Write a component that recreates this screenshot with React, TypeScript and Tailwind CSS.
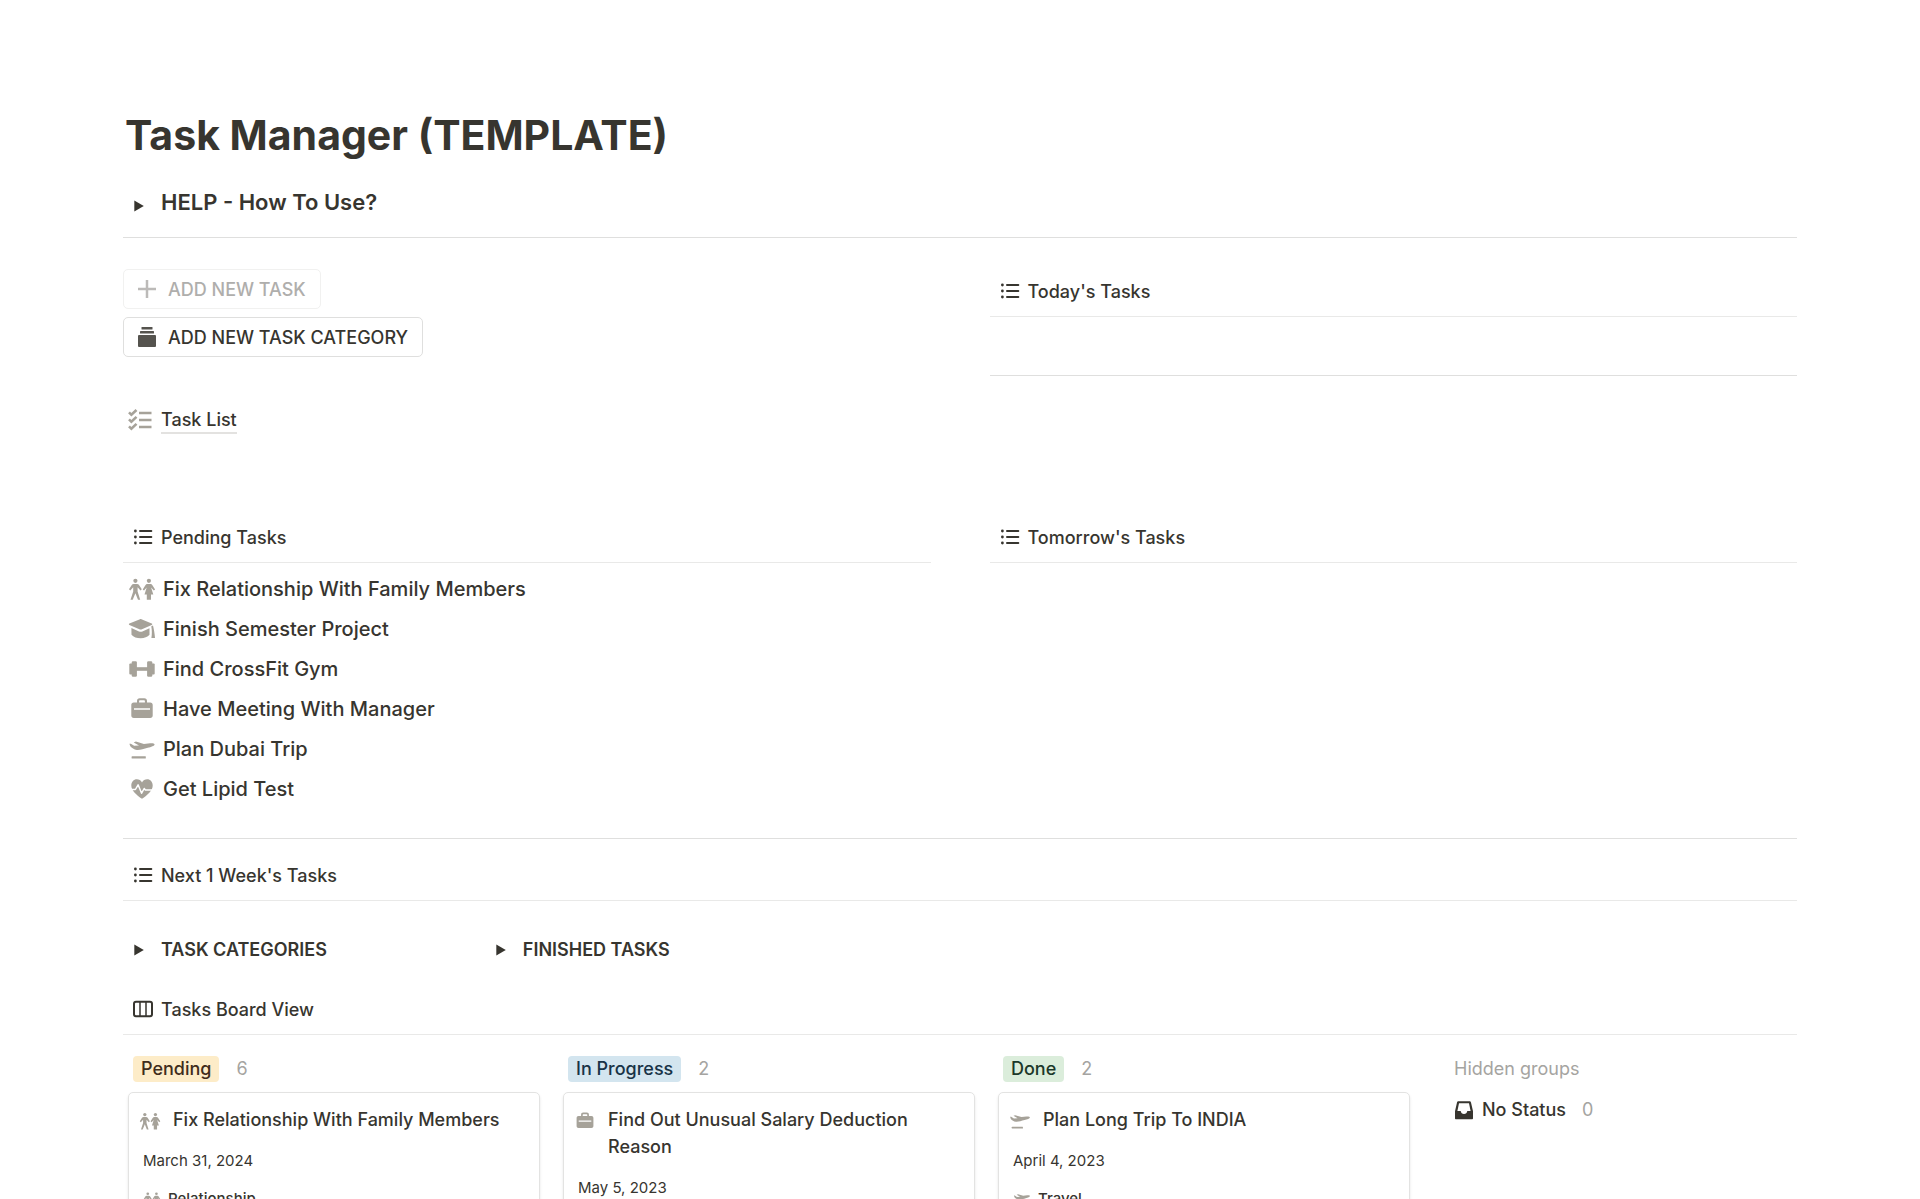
import React from 'react';

type IconName = 'people' | 'graduation' | 'dumbbell' | 'briefcase' | 'plane' | 'heart';

// Filled task icons, all drawn on a 28x28 grid
const TaskIcon = ({ name, className }: { name: IconName; className: string }) => (
  <svg viewBox="0 0 28 28" fill="currentColor" className={`shrink-0 text-[#a6a299] ${className}`} aria-hidden="true">
    {name === 'people' && (
      <>
        <circle cx="7.4" cy="5.8" r="2.1" />
        <path d="M5.8 9h3.2c1 0 1.7.4 2.2 1.2l2.6 4.1-1.3 1.2-2.9-3.2v4.3l2.6 8.1H10L7.4 18.2l-2.7 6.5H2.5l2.7-8.1v-4.3l-2.9 3.2L1 14.3l2.6-4.1C4.1 9.4 4.8 9 5.8 9z" />
        <circle cx="20.9" cy="5.8" r="2.1" />
        <path d="M19.5 9h2.8c1 0 1.6.4 2.1 1.2l2.7 4.2-1.3 1.1-2.7-2.9 2.2 7H23v5.1h-4.200v-5.100h-2.300l2.200-7-2.700 2.900-1.300-1.100 2.700-4.200c.5-.8 1.100-1.200 2.100-1.200z" />
      </>
    )}
    {name === 'graduation' && (
      <>
        <path d="M12 4.3c.5-.3.9-.3 1.4 0l10.3 4.3c.8.3.8 1.1 0 1.4L13.4 14.4c-.5.2-.9.2-1.4 0L1.4 10c-.7-.4-.7-1 0-1.4z" />
        <path d="M3.4 13.1 11 16.4c1.2.5 2.2.5 3.4 0l7.1-3.1v6.4c-1.9 2.2-5 3.6-8.8 3.6s-7.2-1.3-9.2-3.6z" />
        <path d="M23.3 11.2 25 10.6c.9 4 1.7 8 2 12.5h-3.6c.6-3.8.6-7.9-.1-11.9z" />
      </>
    )}
    {name === 'dumbbell' && (
      <>
        <rect x="1.3" y="8.6" width="5" height="10.8" rx="1" />
        <rect x="3.7" y="6.3" width="5.2" height="15.4" rx="1.3" />
        <rect x="8" y="12.2" width="12" height="3.6" />
        <rect x="19.1" y="6.3" width="5.2" height="15.4" rx="1.3" />
        <rect x="21.7" y="8.6" width="5" height="10.8" rx="1" />
      </>
    )}
    {name === 'briefcase' && (
      <path
        fillRule="evenodd"
        d="M9 7.6V6c0-1.7 1-2.7 2.7-2.7h4.6C18 3.3 19 4.3 19 6v1.6h3.2c1.6 0 2.5.9 2.5 2.5v10.4c0 1.6-.9 2.5-2.5 2.5H5.8c-1.6 0-2.5-.9-2.5-2.5V10.1c0-1.6.9-2.5 2.500-2.500zM11.100 7.600h5.800V6.100c0-.5-.3-.8-.8-.8h-4.200c-.5 0-.8.3-.8.800zM6 13.300v1.500h16v-1.500z"
      />
    )}
    {name === 'plane' && (
      <>
        <path d="M1.4 8.7h1.4l3.4 2.1 4.8-.4-5.3-3 2.2-.8 8 2.300 6.200-.7c2.400-.2 4.500.2 4.500 1.200 0 1.300-3.600 2.500-6.800 3.400-4.100 1.200-8.100 2.400-11 2.100-2.800-.3-5-1.800-6.500-3.600z" />
        <rect x="3.6" y="21.3" width="14.2" height="2.3" rx=".5" />
      </>
    )}
    {name === 'heart' && (
      <>
        <path d="M14 23.8C8.6 20 3.3 15.5 3.3 10.4c0-3.5 2.4-6.1 5.5-6.1 2.2 0 4.1 1.1 5.2 3.1 1.1-2 3-3.1 5.2-3.1 3.1 0 5.5 2.6 5.5 6.1C24.7 15.5 19.4 20 14 23.8z" />
        <path d="M3 14.5h4.4l2.7-4.7 3.5 8.4 2.6-4.7 1.2 1.5H25" fill="none" stroke="white" strokeWidth="1.5" strokeLinejoin="round" />
      </>
    )}
  </svg>
);

const ListIcon = () => (
  <svg viewBox="0 0 20 20" fill="currentColor" className="w-5 h-5 shrink-0" aria-hidden="true">
    <circle cx="2.4" cy="4" r="1.4" />
    <circle cx="2.4" cy="10" r="1.4" />
    <circle cx="2.4" cy="16" r="1.4" />
    <rect x="6" y="3" width="13.3" height="2" rx="1" />
    <rect x="6" y="9" width="13.3" height="2" rx="1" />
    <rect x="6" y="15" width="13.3" height="2" rx="1" />
  </svg>
);

const BoardIcon = () => (
  <svg viewBox="0 0 20 20" fill="none" stroke="currentColor" className="w-5 h-5 shrink-0" aria-hidden="true">
    <rect x="1" y="2.7" width="18" height="14.6" rx="2" strokeWidth="2" />
    <path d="M7 3v14M13 3v14" strokeWidth="1.5" />
  </svg>
);

const ChecklistIcon = () => (
  <svg viewBox="0 0 24 24" fill="none" stroke="currentColor" strokeWidth="2.6" className="w-6 h-6 shrink-0 text-[#a6a299]" aria-hidden="true">
    <path d="M1 3.4 3.4 5.8 8.500 1M1 10.400l2.400 2.400 5.100-4.900M1 17.400l2.400 2.400 5.100-4.900M11 4h12.500M11 11h12.500M11 18h12.500" />
  </svg>
);

const Triangle = () => (
  <svg viewBox="0 0 10 12" fill="currentColor" className="w-2.5 h-3 shrink-0" aria-hidden="true">
    <path d="M.3.6 9.800 6 .3 11.400z" />
  </svg>
);

const ViewHeader = ({ title, board = false }: { title: string; board?: boolean }) => (
  <div className="h-[51px] pl-2.5 flex items-center gap-2 border-b border-[#e9e9e8]">
    {board ? <BoardIcon /> : <ListIcon />}
    <h3 className="font-medium">{title}</h3>
  </div>
);

const pendingTasks: { icon: IconName; title: string }[] = [
  { icon: 'people', title: 'Fix Relationship With Family Members' },
  { icon: 'graduation', title: 'Finish Semester Project' },
  { icon: 'dumbbell', title: 'Find CrossFit Gym' },
  { icon: 'briefcase', title: 'Have Meeting With Manager' },
  { icon: 'plane', title: 'Plan Dubai Trip' },
  { icon: 'heart', title: 'Get Lipid Test' },
];

const columns: { status: string; count: number; tag: string; icon: IconName; title: string; date: string; category: string }[] = [
  {
    status: 'Pending',
    count: 6,
    tag: 'bg-[#fdecc8] text-[#402c1b]',
    icon: 'people',
    title: 'Fix Relationship With Family Members',
    date: 'March 31, 2024',
    category: 'Relationship',
  },
  {
    status: 'In Progress',
    count: 2,
    tag: 'bg-[#d3e5ef] text-[#183347]',
    icon: 'briefcase',
    title: 'Find Out Unusual Salary Deduction Reason',
    date: 'May 5, 2023',
    category: 'Work',
  },
  {
    status: 'Done',
    count: 2,
    tag: 'bg-[#dbeddb] text-[#1c3829]',
    icon: 'plane',
    title: 'Plan Long Trip To INDIA',
    date: 'April 4, 2023',
    category: 'Travel',
  },
];

export default function App() {
  return (
    <main className="h-screen overflow-hidden bg-white px-[123px] pt-[108px] font-['Inter',sans-serif] text-[18px] leading-[27px] text-[#37352f]">
      <h1 className="pl-0.5 text-[41px] leading-[54px] font-bold">Task Manager (TEMPLATE)</h1>

      <button type="button" aria-expanded="false" className="mt-6 pl-[11px] flex items-end gap-[17px] text-[22px] leading-8 font-semibold">
        <span className="pb-1.5">
          <Triangle />
        </span>
        HELP - How To Use?
      </button>
      <hr className="mt-[19px] border-[#dfdfde]" />

      {/* Quick actions and today's list */}
      <div className="mt-[15px] grid grid-cols-2 gap-x-[59px]">
        <section className="pt-4 flex flex-col items-start">
          <button
            type="button"
            disabled
            className="h-10 px-[14px] flex items-center gap-3 rounded-[5px] border border-[#f1f1f0] font-medium text-[#afaeac]"
          >
            <svg viewBox="0 0 18 18" className="w-[18px] h-[18px]" stroke="#bcbab8" strokeWidth="2.5" aria-hidden="true">
              <path d="M9 0v18M0 9h18" />
            </svg>
            ADD NEW TASK
          </button>
          <button
            type="button"
            className="mt-2 h-10 px-[14px] flex items-center gap-3 rounded-[5px] border border-[#dfdfde] font-medium"
          >
            <svg viewBox="0 0 18 20" className="w-[18px] h-5" fill="#55534e" aria-hidden="true">
              <rect x="3.5" y="0" width="11" height="2.4" rx=".5" />
              <rect x="2" y="4" width="14" height="2.4" rx=".5" />
              <rect x="0" y="8" width="18" height="12" rx="1" />
            </svg>
            ADD NEW TASK CATEGORY
          </button>
          <a href="#task-list" className="mt-[51px] pl-[5px] flex items-center gap-[9px] font-medium">
            <ChecklistIcon />
            <span className="border-b-2 border-[#e3e2e0] leading-6">Task List</span>
          </a>
        </section>
        <section className="pt-[13px]">
          <ViewHeader title="Today's Tasks" />
          <hr className="mt-[58px] border-[#dfdfde]" />
        </section>
      </div>

      {/* Pending and tomorrow's lists */}
      <div className="mt-[78px] grid grid-cols-2 gap-x-[59px]">
        <section>
          <ViewHeader title="Pending Tasks" />
          <ul className="mt-1.5">
            {pendingTasks.map((task) => (
              <li key={task.title} className="h-10 pl-[5px] flex items-center gap-[7px] text-[20px] font-medium">
                <TaskIcon name={task.icon} className="w-7 h-7" />
                {task.title}
              </li>
            ))}
          </ul>
        </section>
        <section>
          <ViewHeader title="Tomorrow's Tasks" />
        </section>
      </div>

      <hr className="mt-[29px] border-[#dfdfde]" />
      <section className="mt-[11px]">
        <ViewHeader title="Next 1 Week's Tasks" />
      </section>

      <div className="mt-[35px] grid grid-cols-[3fr_13fr] gap-x-[59px]">
        {['TASK CATEGORIES', 'FINISHED TASKS'].map((label) => (
          <button key={label} type="button" aria-expanded="false" className="pl-[11px] flex items-center gap-[17px] font-semibold">
            <Triangle />
            {label}
          </button>
        ))}
      </div>

      {/* Board */}
      <section className="mt-[21px]">
        <ViewHeader title="Tasks Board View" board />
        <div className="mt-[21px] pl-[5px] flex items-start gap-[23px]">
          {columns.map((column) => (
            <div key={column.status} className="w-[412px] shrink-0">
              <div className="pl-[5px] flex items-center gap-[17px]">
                <h4 className={`px-2 rounded-sm font-medium leading-[26px] ${column.tag}`}>{column.status}</h4>
                <span className="text-[#a5a4a1] leading-[26px]">{column.count}</span>
              </div>
              <article className="mt-[10px] px-[14px] pt-[13px] pb-5 rounded-[5px] border border-[#e3e3e2] shadow-[0_2px_3px_#0f0f0f1a]">
                <div className="-ml-1 flex items-start gap-3">
                  <TaskIcon name={column.icon} className="w-[22px] h-[22px] mt-1" />
                  <h5 className="font-medium">{column.title}</h5>
                </div>
                <p className="mt-4 text-[15px] leading-6">{column.date}</p>
                <p className="mt-[14px] flex items-center gap-[7px] text-[15px] leading-6 font-medium">
                  <TaskIcon name={column.icon} className="w-[18px] h-[18px]" />
                  {column.category}
                </p>
              </article>
            </div>
          ))}
          <div className="pl-[21px]">
            <h4 className="text-[#a5a4a1] leading-[26px]">Hidden groups</h4>
            <div className="mt-[14px] flex items-center">
              <svg viewBox="0 0 20 20" className="w-5 h-5" aria-hidden="true">
                <path
                  fill="currentColor"
                  fillRule="evenodd"
                  d="M4.6 1.2h10.8c.9 0 1.4.4 1.6 1.2l2 8.8v7c0 .6-.4 1-1 1H2c-.6 0-1-.4-1-1v-7l2-8.8c.2-.8.7-1.2 1.6-1.2zM5 3.2 3.4 11h3.3c.3 1.7 1.5 3 3.3 3s3-1.300 3.300-3h3.300L15 3.200z"
                />
              </svg>
              <span className="ml-2 font-medium">No Status</span>
              <span className="ml-4 text-[#a5a4a1]">0</span>
            </div>
          </div>
        </div>
      </section>
    </main>
  );
}
